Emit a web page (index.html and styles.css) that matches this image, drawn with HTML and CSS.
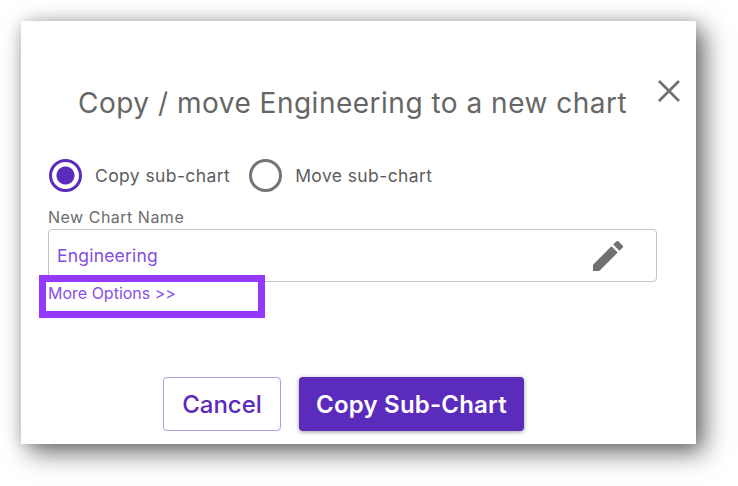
FILE: index.html
```html
<!DOCTYPE html>
<html lang="en">

<head>
    <meta charset="UTF-8">
    <title>Copy / move sub-chart</title>
    <link rel="stylesheet" href="styles.css">
</head>

<body>
    <div class="dialog">
        <div class="dialog-head">
            <h2 class="title">Copy / move Engineering to a new chart</h2>
            <button class="close" aria-label="Close">
                <svg width="24" height="24" viewBox="0 0 24 24">
                    <path d="M2 2 L22 22 M22 2 L2 22" stroke="#6f6f6f" stroke-width="2.6" fill="none" />
                </svg>
            </button>
        </div>
        <div class="radios">
            <label class="radio">
                <span class="radio-dot checked"></span>
                Copy sub-chart
            </label>
            <label class="radio">
                <span class="radio-dot"></span>
                Move sub-chart
            </label>
        </div>
        <div class="field">
            <div class="field-label">New Chart Name</div>
            <div class="field-box">
                <span class="field-value">Engineering</span>
                <svg class="edit-icon" width="40" height="40" viewBox="0 0 24 24">
                    <path fill="#707070" d="M3 17.25V21h3.75L17.81 9.94l-3.75-3.75L3 17.25zM20.71 7.04a1 1 0 0 0 0-1.41l-2.34-2.34a1 1 0 0 0-1.41 0l-1.83 1.83 3.75 3.75 1.83-1.83z" />
                </svg>
            </div>
            <a class="more" href="#">More Options &gt;&gt;</a>
            <div class="highlight"></div>
        </div>
        <div class="actions">
            <button class="btn btn-cancel">Cancel</button>
            <button class="btn btn-copy">Copy Sub-Chart</button>
        </div>
    </div>
</body>

</html>
```

FILE: styles.css
```css
body {
    margin: 0;
    padding: 21px 0 0 21px;
    min-height: 100vh;
    box-sizing: border-box;
    background: #fff;
    font-family: Inter, "Open Sans", sans-serif;
    color: #555;
}

.dialog {
    width: 675px;
    height: 423px;
    box-sizing: border-box;
    padding: 0 39px 0 27px;
    background: #fff;
    box-shadow: 8px 8px 24px rgba(0, 0, 0, 0.6), 0 0 12px rgba(0, 0, 0, 0.12);
    display: flex;
    flex-direction: column;
}

.dialog-head {
    position: relative;
    height: 138px;
}

.title {
    margin: 0;
    padding: 63px 0 0 30px;
    font-size: 28px;
    line-height: 38px;
    font-weight: 400;
    letter-spacing: 0.5px;
    color: #666;
    white-space: nowrap;
}

.close {
    position: absolute;
    top: 58px;
    right: -24px;
    padding: 0;
    border: none;
    background: none;
    line-height: 0;
}

.radios {
    display: flex;
    gap: 19px;
    height: 33px;
    padding-left: 1px;
}

.radio {
    display: flex;
    align-items: center;
    gap: 13px;
    font-size: 17.5px;
    letter-spacing: 0.4px;
    color: #5c5c5c;
}

.radio-dot {
    width: 33px;
    height: 33px;
    box-sizing: border-box;
    border: 3px solid #757575;
    border-radius: 50%;
}

.radio-dot.checked {
    border-color: #5b2bbb;
    background: radial-gradient(circle, #5b2bbb 0 8.5px, transparent 9.5px);
}

.field {
    position: relative;
    margin-top: 15px;
}

.field-label {
    font-size: 16px;
    line-height: 20px;
    letter-spacing: 0.5px;
    color: #6c6c6c;
}

.field-box {
    height: 53px;
    box-sizing: border-box;
    margin-top: 2px;
    padding: 0 28px 0 8px;
    border: 1px solid #c4c4c4;
    border-radius: 4px;
    display: flex;
    align-items: center;
    justify-content: space-between;
}

.field-value {
    font-size: 17.5px;
    letter-spacing: 0.2px;
    color: #8350dc;
}

.more {
    display: block;
    margin-top: 1px;
    font-size: 16px;
    line-height: 21px;
    color: #8a4fe6;
    text-decoration: none;
}

.highlight {
    position: absolute;
    left: -9px;
    top: 68px;
    width: 226px;
    height: 43px;
    box-sizing: border-box;
    border: 7px solid #9538ff;
}

.actions {
    display: flex;
    gap: 18px;
    margin-top: 73px;
    padding-left: 115px;
}

.btn {
    height: 54px;
    box-sizing: border-box;
    border-radius: 4px;
    font: inherit;
    font-size: 24px;
    font-weight: 500;
}

.btn-cancel {
    width: 118px;
    background: #fff;
    border: 1px solid #b39ae6;
    color: #5b2bbb;
}

.btn-copy {
    width: 225px;
    background: #5b2bbb;
    border: none;
    color: #fff;
    font-weight: 600;
    letter-spacing: 0.2px;
    box-shadow: 0 1px 4px rgba(0, 0, 0, 0.4);
}
```
